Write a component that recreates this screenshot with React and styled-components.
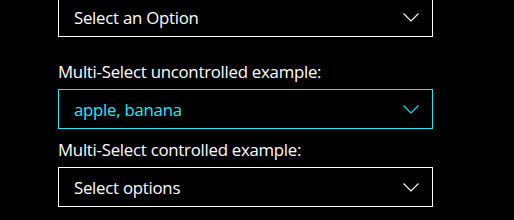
import React from 'react';
import styled, { createGlobalStyle } from 'styled-components';

const GlobalStyle = createGlobalStyle`
  html, body {
    margin: 0;
    padding: 0;
    background: #000;
    overflow: hidden;
  }
  body {
    font-family: "Open Sans", "Noto Sans", sans-serif;
    color: #fff;
  }
`;

const Page = styled.div`
  width: 514px;
  height: 220px;
  background: #000;
  overflow: hidden;
`;

const Stack = styled.div`
  display: flex;
  flex-direction: column;
  width: 375px;
  margin: -3px 0 0 58px;
`;

const Field = styled.div`
  display: flex;
  flex-direction: column;
  margin-bottom: ${p => p.$spacing}px;
`;

const Label = styled.label`
  font-size: 16.8px;
  letter-spacing: -0.25px;
  line-height: 24px;
  color: #fff;
  margin-bottom: 5px;
`;

const Dropdown = styled.div`
  box-sizing: border-box;
  height: 40px;
  display: flex;
  align-items: center;
  justify-content: space-between;
  padding: 0 13px 0 15px;
  border: 1px solid ${p => (p.$focused ? '#1aebff' : '#fff')};
  color: ${p => (p.$focused ? '#1aebff' : '#fff')};
  background: #000;
`;

const Title = styled.span`
  font-size: 16.8px;
  letter-spacing: -0.25px;
  line-height: 24px;
  padding-top: 2px;
  white-space: nowrap;
`;

const Caret = styled.svg`
  display: block;
  width: 16px;
  height: 9px;
  flex: none;
`;

function Chevron() {
  return (
    <Caret viewBox="0 0 16 9" fill="none">
      <path d="M0.5 0.5L8 8L15.5 0.5" stroke="currentColor" strokeWidth="1.1" />
    </Caret>
  );
}

export default function App() {
  return (
    <Page>
      <GlobalStyle />
      <Stack>
        <Field $spacing={23}>
          <Dropdown>
            <Title>Select an Option</Title>
            <Chevron />
          </Dropdown>
        </Field>
        <Field $spacing={9}>
          <Label>Multi-Select uncontrolled example:</Label>
          <Dropdown $focused>
            <Title>apple, banana</Title>
            <Chevron />
          </Dropdown>
        </Field>
        <Field $spacing={0}>
          <Label>Multi-Select controlled example:</Label>
          <Dropdown>
            <Title>Select options</Title>
            <Chevron />
          </Dropdown>
        </Field>
      </Stack>
    </Page>
  );
}
